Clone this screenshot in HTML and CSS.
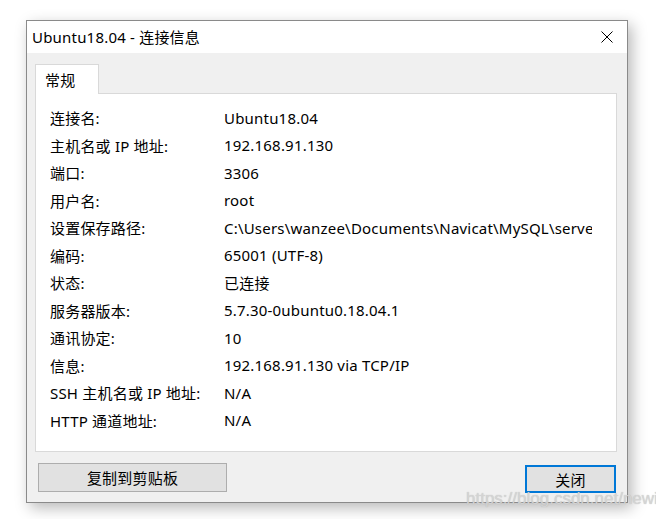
FILE: index.html
```html
<!DOCTYPE html>
<html lang="zh-CN">
<head>
    <meta charset="UTF-8">
    <title>Ubuntu18.04 - 连接信息</title>
    <link rel="stylesheet" href="styles.css">
</head>
<body>
    <div class="dialog">
        <div class="titlebar">
            <span class="title">Ubuntu18.04 - 连接信息</span>
            <svg class="close-x" width="12" height="12" viewBox="0 0 12 12">
                <path d="M0.5 0.5 L11.5 11.5 M11.5 0.5 L0.5 11.5" stroke="#000" stroke-width="1" fill="none"/>
            </svg>
        </div>
        <div class="body">
            <div class="tabs">
                <div class="tab">常规</div>
            </div>
            <div class="panel">
                <div class="row"><span class="label">连接名:</span><span class="value">Ubuntu18.04</span></div>
                <div class="row"><span class="label">主机名或 IP 地址:</span><span class="value">192.168.91.130</span></div>
                <div class="row"><span class="label">端口:</span><span class="value">3306</span></div>
                <div class="row"><span class="label">用户名:</span><span class="value">root</span></div>
                <div class="row"><span class="label">设置保存路径:</span><span class="value">C:\Users\wanzee\Documents\Navicat\MySQL\servers\Ubuntu18.04</span></div>
                <div class="row"><span class="label">编码:</span><span class="value">65001 (UTF-8)</span></div>
                <div class="row"><span class="label">状态:</span><span class="value">已连接</span></div>
                <div class="row"><span class="label">服务器版本:</span><span class="value">5.7.30-0ubuntu0.18.04.1</span></div>
                <div class="row"><span class="label">通讯协定:</span><span class="value">10</span></div>
                <div class="row"><span class="label">信息:</span><span class="value">192.168.91.130 via TCP/IP</span></div>
                <div class="row"><span class="label">SSH 主机名或 IP 地址:</span><span class="value">N/A</span></div>
                <div class="row"><span class="label">HTTP 通道地址:</span><span class="value">N/A</span></div>
            </div>
            <div class="buttons">
                <button class="btn copy-btn">复制到剪贴板</button>
                <button class="btn close-btn">关闭</button>
            </div>
        </div>
    </div>
    <div class="watermark">https://blog.csdn.net/newii</div>
</body>
</html>
```

FILE: styles.css
```css
body {
    margin: 0;
    padding: 20px 0 0 26px;
    background: #fff;
    font-family: 'Noto Sans', 'Noto Sans CJK SC', sans-serif;
    font-size: 15px;
    letter-spacing: 0.2px;
    color: #000;
    height: 519px;
    box-sizing: border-box;
    overflow: hidden;
    position: relative;
}

.dialog {
    width: 602px;
    height: 483px;
    box-sizing: border-box;
    border: 1px solid #8a8a8a;
    background: #f0f0f0;
    box-shadow: 4px 5px 14px rgba(0, 0, 0, 0.28);
    display: flex;
    flex-direction: column;
}

.titlebar {
    height: 32px;
    background: #fff;
    display: flex;
    align-items: center;
    justify-content: space-between;
    padding: 0 14px 0 5px;
}

.title {
    font-size: 15px;
    line-height: 1;
}

.body {
    flex: 1;
    padding: 10px 10px 0 8px;
    display: flex;
    flex-direction: column;
}

.tabs {
    display: flex;
    height: 30px;
}

.tab {
    width: 64px;
    box-sizing: border-box;
    border: 1px solid #d9d9d9;
    border-bottom: none;
    background: #fff;
    padding: 4px 0 0 9px;
    font-size: 15px;
    position: relative;
    top: 1px;
}

.panel {
    height: 359px;
    box-sizing: border-box;
    border: 1px solid #d9d9d9;
    background: #fff;
    padding: 10px 24px 0 14px;
}

.row {
    display: flex;
    height: 27.5px;
    align-items: center;
    white-space: nowrap;
}

.label {
    width: 174px;
    flex: none;
}

.value {
    flex: 1;
    overflow: hidden;
}

.buttons {
    display: flex;
    justify-content: space-between;
    align-items: flex-start;
    padding: 11px 1px 0 3px;
}

.btn {
    font-family: 'Noto Sans', 'Noto Sans CJK SC', sans-serif;
    font-size: 15px;
    letter-spacing: 0.2px;
    background: #e1e1e1;
    color: #000;
    padding: 0;
    cursor: pointer;
}

.copy-btn {
    width: 189px;
    height: 29px;
    border: 1px solid #adadad;
}

.close-btn {
    width: 91px;
    height: 28px;
    border: 2px solid #0078d7;
    margin-top: 2px;
}

.watermark {
    position: absolute;
    left: 466px;
    top: 489px;
    font-family: 'Liberation Sans', Arial, sans-serif;
    font-size: 17px;
    letter-spacing: 0;
    color: rgba(215, 215, 215, 0.9);
    text-shadow: 0 0 1px rgba(150, 150, 150, 0.6);
}
```
